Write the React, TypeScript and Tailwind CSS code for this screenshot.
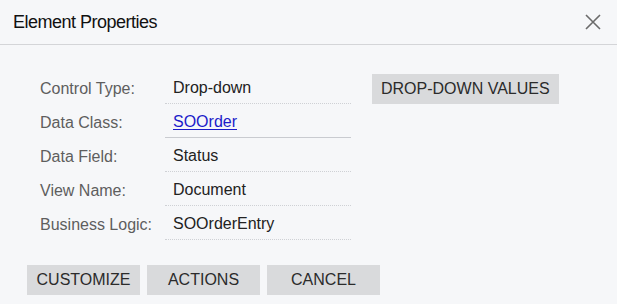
import React from "react";

const rows: { label: string; value: string; link?: boolean }[] = [
  { label: "Control Type:", value: "Drop-down" },
  { label: "Data Class:", value: "SOOrder", link: true },
  { label: "Data Field:", value: "Status" },
  { label: "View Name:", value: "Document" },
  { label: "Business Logic:", value: "SOOrderEntry" },
];

export default function App() {
  return (
    <div className="w-[617px] h-[304px] bg-[#f6f7f9] font-['Liberation_Sans',Arial,sans-serif] text-[#222] overflow-hidden">
      {/* Header */}
      <div className="h-[45px] flex items-center justify-between pl-[13px] pr-[16px] border-b border-[#d4d5d8]">
        <div className="text-[18px] tracking-[-0.5px] text-[#111] pt-[1px]">Element Properties</div>
        <svg width="16" height="16" viewBox="0 0 16 16" className="text-[#6b6b6b]">
          <path d="M1 1L15 15M15 1L1 15" stroke="currentColor" strokeWidth="1.6" />
        </svg>
      </div>

      {/* Body */}
      <div className="flex pl-[40px] pt-[25px]">
        <div className="flex flex-col w-[311px]">
          {rows.map((r) => (
            <div key={r.label} className="flex h-[34px]">
              <div className="w-[125px] flex items-center text-[16px] text-[#5e5e5e] pt-[3px]">
                {r.label}
              </div>
              <div
                className={
                  "w-[186px] flex items-center pl-[8px] pt-[3px] text-[16px] " +
                  (r.link
                    ? "border-b border-solid border-[#c9cbd0]"
                    : "border-b border-dotted border-[#cfd1d5]")
                }
              >
                {r.link ? (
                  <span className="text-[#1c1cc9] underline underline-offset-2">{r.value}</span>
                ) : (
                  r.value
                )}
              </div>
            </div>
          ))}
        </div>
        <div className="pl-[21px] pt-[4px]">
          <button className="h-[30px] px-[9px] bg-[#d9dadc] text-[16px] text-[#2b2b2b] flex items-center">
            DROP-DOWN VALUES
          </button>
        </div>
      </div>

      {/* Footer */}
      <div className="flex gap-[7px] pl-[27px] pt-[25px]">
        {["CUSTOMIZE", "ACTIONS", "CANCEL"].map((b) => (
          <button
            key={b}
            className="w-[113px] h-[30px] bg-[#d9dadc] text-[16px] text-[#2b2b2b] flex items-center justify-center"
          >
            {b}
          </button>
        ))}
      </div>
    </div>
  );
}
